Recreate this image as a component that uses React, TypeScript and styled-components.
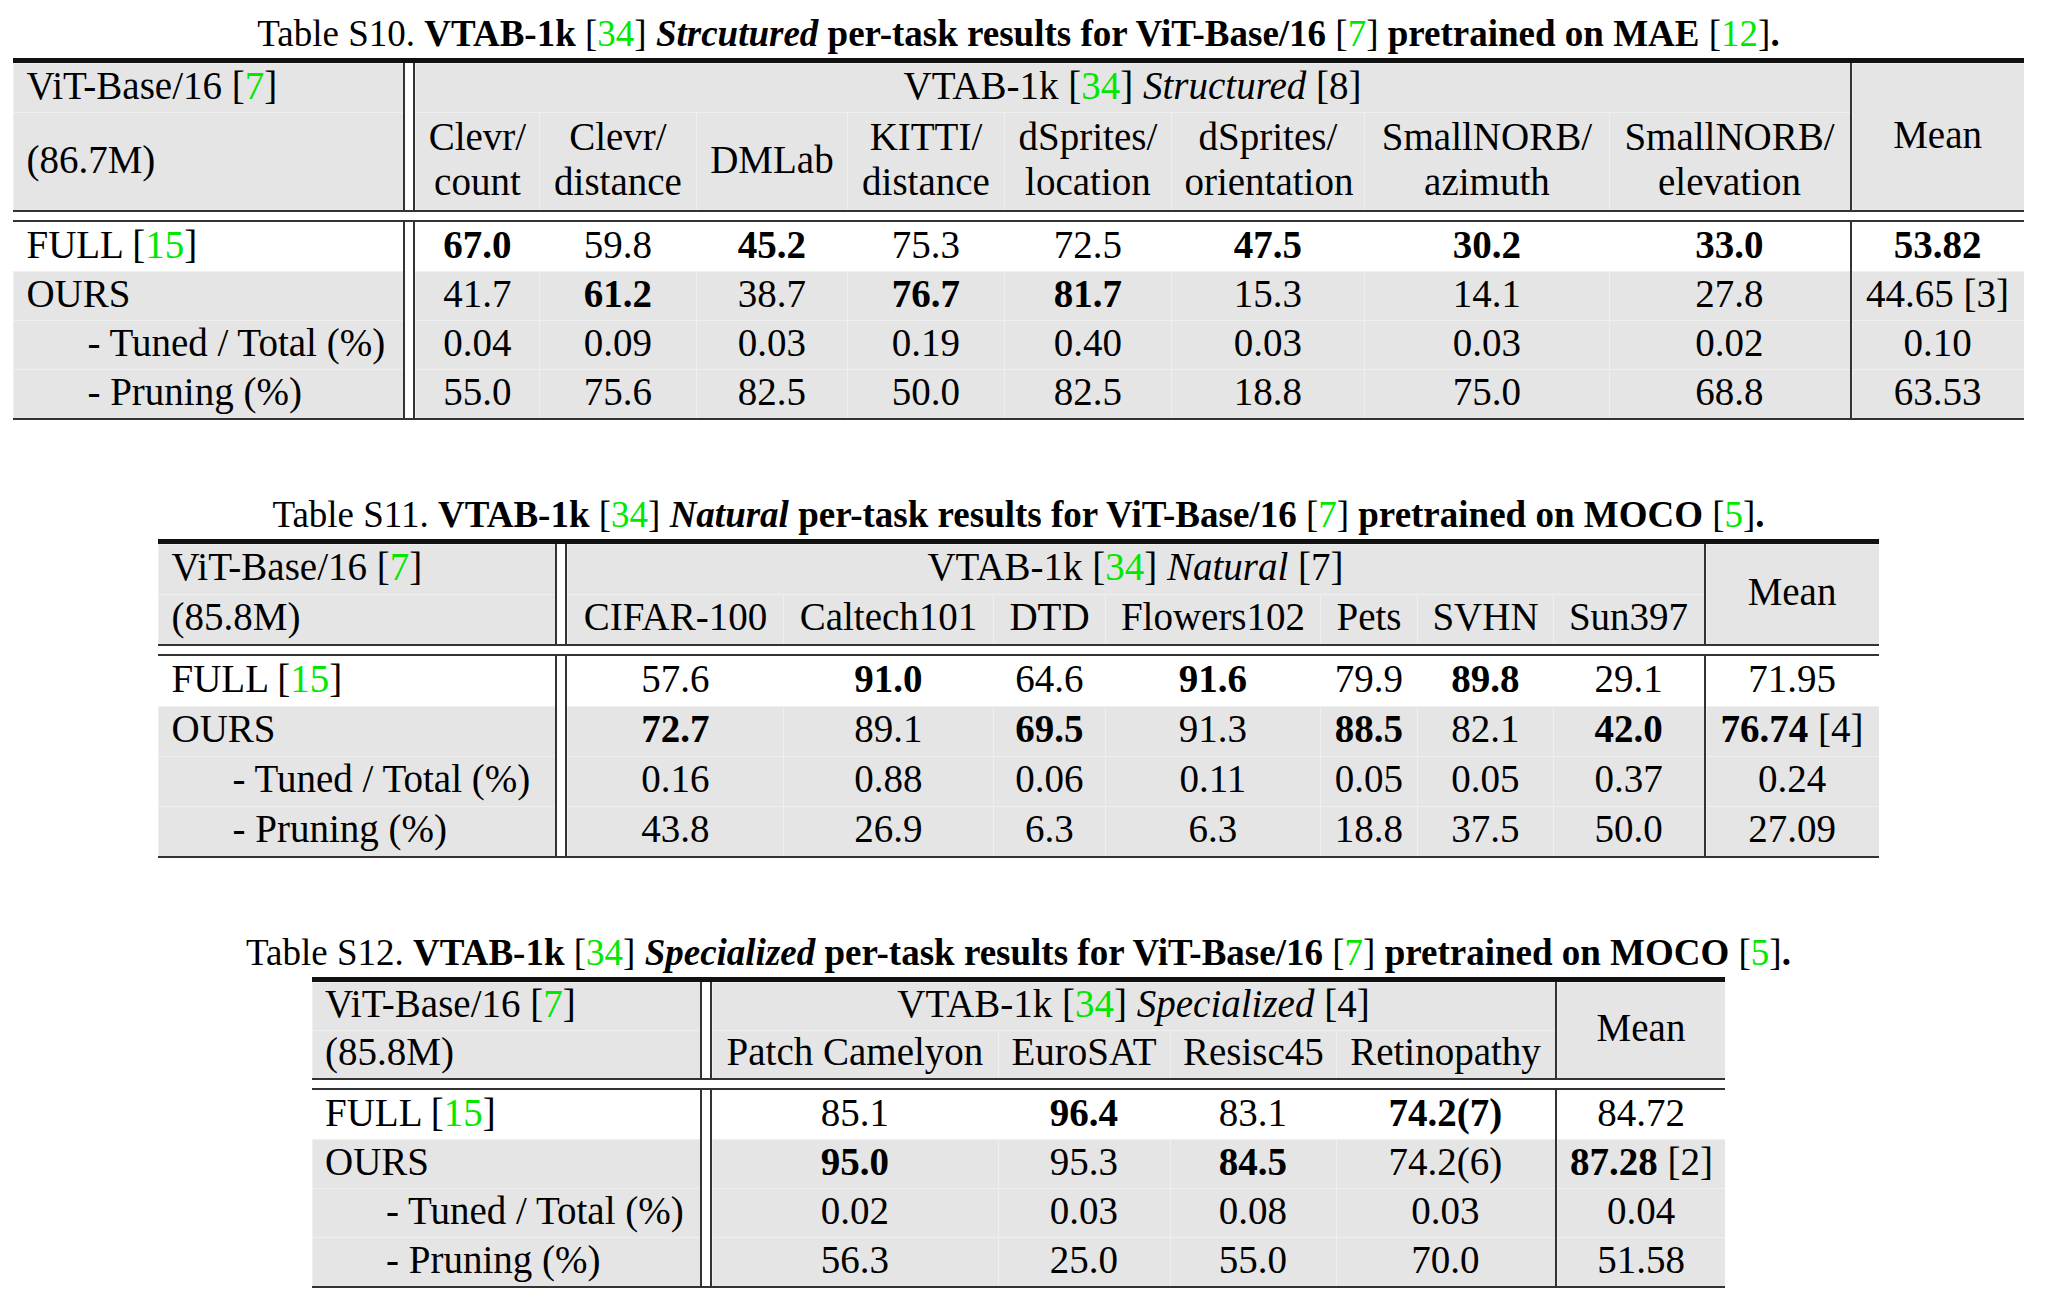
import React from 'react';
import styled, { createGlobalStyle } from 'styled-components';

const GlobalStyle = createGlobalStyle`
  html, body {
    margin: 0;
    padding: 0;
    background: #ffffff;
  }
  body {
    font-family: "Liberation Serif", "Times New Roman", Times, serif;
    color: #000000;
  }
`;

const Page = styled.main`
  width: 2037px;
  padding-top: 14px;
  display: flex;
  flex-direction: column;
  align-items: center;
  gap: 75px;
`;

const Figure = styled.section`
  display: flex;
  flex-direction: column;
  align-items: center;
  gap: 4px;
`;

const Caption = styled.p`
  margin: 0;
  font-size: 37px;
  line-height: 40px;
  white-space: nowrap;
`;

const Cite = styled.span`
  color: #00e800;
`;

const Grid = styled.table<{ $w: number }>`
  width: ${p => p.$w}px;
  table-layout: fixed;
  border-collapse: separate;
  border-spacing: 0;
  border-top: 5px solid #111111;
  border-bottom: 2px solid #333333;
  font-size: 39px;
`;

const Col = styled.col<{ $w: number }>`
  width: ${p => p.$w}px;
`;

const Row = styled.tr<{ $h: number }>`
  height: ${p => p.$h}px;
`;

const Cell = styled.td<{ $lh: number; $shade?: boolean; $left?: boolean; $mean?: boolean }>`
  padding: 0 13px 4px;
  line-height: ${p => p.$lh}px;
  text-align: ${p => (p.$left ? 'left' : 'center')};
  vertical-align: middle;
  white-space: nowrap;
  background: ${p => (p.$shade ? '#e5e5e5' : '#ffffff')};
  box-shadow: ${p => (p.$shade ? 'inset 1px 1px 0 #efefef' : 'none')};
  border-left: ${p => (p.$mean ? '2px solid #333333' : '0')};
`;

// the "||" after the first column
const Rule = styled.td`
  padding: 0;
  background: #ffffff;
  border-left: 2px solid #333333;
  border-right: 2px solid #333333;
`;

// the double \hline under the header
const Gap = styled.td`
  padding: 0;
  background: #ffffff;
  border-top: 2px solid #333333;
  border-bottom: 2px solid #333333;
`;

const Indent = styled.span`
  padding-left: 61px;
`;

interface TableSpec {
  caption: React.ReactNode;
  group: React.ReactNode;
  params: string;
  tasks: string[];
  widths: number[];
  head: [number, number];
  body: number;
  rows: string[][];
}

const renderValue = (v: string) =>
  v.split('**').map((part, i) => (i % 2 ? <b key={i}>{part}</b> : <React.Fragment key={i}>{part}</React.Fragment>));

const renderTask = (t: string) =>
  t.split('\n').map((line, i) => (
    <React.Fragment key={i}>
      {i > 0 && <br />}
      {line}
    </React.Fragment>
  ));

const makeCaption = (no: string, kind: string, source: string, ref: string) => (
  <>
    Table {no}. <b>VTAB-1k</b> [<Cite>34</Cite>] <b><i>{kind}</i> per-task results for ViT-Base/16</b> [<Cite>7</Cite>]{' '}
    <b>pretrained on {source}</b> [<Cite>{ref}</Cite>]<b>.</b>
  </>
);

const makeGroup = (kind: string, n: number) => (
  <>
    VTAB-1k [<Cite>34</Cite>] <i>{kind}</i> [{n}]
  </>
);

const rowLabels: React.ReactNode[] = [
  <>FULL [<Cite>15</Cite>]</>,
  'OURS',
  <Indent>- Tuned / Total (%)</Indent>,
  <Indent>- Pruning (%)</Indent>,
];
const rowShade = [false, true, true, true];

const tables: TableSpec[] = [
  {
    caption: makeCaption('S10', 'Strcutured', 'MAE', '12'),
    group: makeGroup('Structured', 8),
    params: '(86.7M)',
    tasks: [
      'Clevr/\ncount',
      'Clevr/\ndistance',
      'DMLab',
      'KITTI/\ndistance',
      'dSprites/\nlocation',
      'dSprites/\norientation',
      'SmallNORB/\nazimuth',
      'SmallNORB/\nelevation',
    ],
    widths: [390, 12, 124, 157, 151, 157, 167, 193, 245, 240, 174],
    head: [49, 98],
    body: 49,
    rows: [
      ['**67.0**', '59.8', '**45.2**', '75.3', '72.5', '**47.5**', '**30.2**', '**33.0**', '**53.82**'],
      ['41.7', '**61.2**', '38.7', '**76.7**', '**81.7**', '15.3', '14.1', '27.8', '44.65 [3]'],
      ['0.04', '0.09', '0.03', '0.19', '0.40', '0.03', '0.03', '0.02', '0.10'],
      ['55.0', '75.6', '82.5', '50.0', '82.5', '18.8', '75.0', '68.8', '63.53'],
    ],
  },
  {
    caption: makeCaption('S11', 'Natural', 'MOCO', '5'),
    group: makeGroup('Natural', 7),
    params: '(85.8M)',
    tasks: ['CIFAR-100', 'Caltech101', 'DTD', 'Flowers102', 'Pets', 'SVHN', 'Sun397'],
    widths: [397, 12, 216, 210, 112, 215, 97, 136, 150, 175],
    head: [50, 50],
    body: 50,
    rows: [
      ['57.6', '**91.0**', '64.6', '**91.6**', '79.9', '**89.8**', '29.1', '71.95'],
      ['**72.7**', '89.1', '**69.5**', '91.3', '**88.5**', '82.1', '**42.0**', '**76.74** [4]'],
      ['0.16', '0.88', '0.06', '0.11', '0.05', '0.05', '0.37', '0.24'],
      ['43.8', '26.9', '6.3', '6.3', '18.8', '37.5', '50.0', '27.09'],
    ],
  },
  {
    caption: makeCaption('S12', 'Specialized', 'MOCO', '5'),
    group: makeGroup('Specialized', 4),
    params: '(85.8M)',
    tasks: ['Patch Camelyon', 'EuroSAT', 'Resisc45', 'Retinopathy'],
    widths: [388, 12, 286, 172, 166, 219, 170],
    head: [48, 48],
    body: 49,
    rows: [
      ['85.1', '**96.4**', '83.1', '**74.2(7)**', '84.72'],
      ['**95.0**', '95.3', '**84.5**', '74.2(6)', '**87.28** [2]'],
      ['0.02', '0.03', '0.08', '0.03', '0.04'],
      ['56.3', '25.0', '55.0', '70.0', '51.58'],
    ],
  },
];

const ResultTable: React.FC<{ spec: TableSpec }> = ({ spec }) => {
  const { tasks, widths, head, body, rows } = spec;
  const total = widths.reduce((a, b) => a + b, 0);
  const lh = head[0] - 4;
  const blh = body - 4;

  return (
    <Figure>
      <Caption>{spec.caption}</Caption>
      <Grid $w={total}>
        <colgroup>
          {widths.map((w, i) => (
            <Col key={i} $w={w} />
          ))}
        </colgroup>
        <thead>
          <Row $h={head[0]}>
            <Cell $lh={lh} $shade $left>
              ViT-Base/16 [<Cite>7</Cite>]
            </Cell>
            <Rule />
            <Cell $lh={lh} $shade colSpan={tasks.length}>
              {spec.group}
            </Cell>
            <Cell $lh={lh} $shade $mean rowSpan={2}>
              Mean
            </Cell>
          </Row>
          <Row $h={head[1]}>
            <Cell $lh={lh} $shade $left>
              {spec.params}
            </Cell>
            <Rule />
            {tasks.map(t => (
              <Cell key={t} $lh={lh} $shade>
                {renderTask(t)}
              </Cell>
            ))}
          </Row>
          <Row $h={12}>
            <Gap colSpan={tasks.length + 3} />
          </Row>
        </thead>
        <tbody>
          {rows.map((vals, r) => (
            <Row key={r} $h={body}>
              <Cell $lh={blh} $shade={rowShade[r]} $left>
                {rowLabels[r]}
              </Cell>
              <Rule />
              {vals.map((v, c) => (
                <Cell key={c} $lh={blh} $shade={rowShade[r]} $mean={c === vals.length - 1}>
                  {renderValue(v)}
                </Cell>
              ))}
            </Row>
          ))}
        </tbody>
      </Grid>
    </Figure>
  );
};

const App: React.FC = () => (
  <>
    <GlobalStyle />
    <Page>
      {tables.map((t, i) => (
        <ResultTable key={i} spec={t} />
      ))}
    </Page>
  </>
);

export default App;
